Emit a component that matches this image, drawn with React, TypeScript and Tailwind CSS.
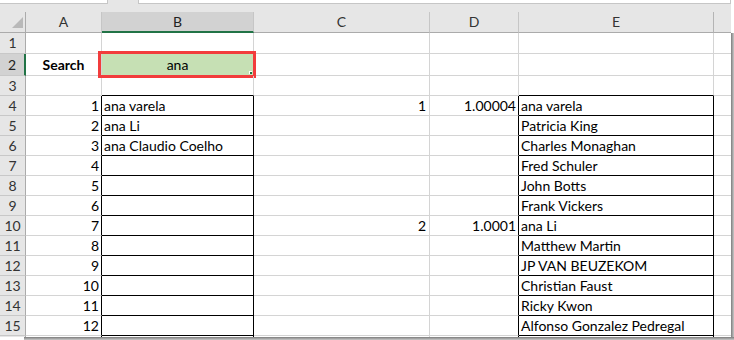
import React from 'react';

type Row = {
  n: number;
  A?: string;
  B?: string;
  C?: string;
  D?: string;
  E?: string;
  hidden?: boolean;
};

const names = [
  'ana varela', 'Patricia King', 'Charles Monaghan', 'Fred Schuler', 'John Botts', 'Frank Vickers',
  'ana Li', 'Matthew Martin', 'JP VAN BEUZEKOM', 'Christian Faust', 'Ricky Kwon', 'Alfonso Gonzalez Pedregal',
];
const matches = ['ana varela', 'ana Li', 'ana Claudio Coelho'];

const rows: Row[] = [
  { n: 1 },
  { n: 2, A: 'Search', B: 'ana' },
  { n: 3 },
  ...names.map((e, i) => ({
    n: i + 4,
    A: String(i + 1),
    B: matches[i],
    C: i === 0 ? '1' : i === 6 ? '2' : undefined,
    D: i === 0 ? '1.00004' : i === 6 ? '1.0001' : undefined,
    E: e,
  })),
  // row 16 only peeks out under row 15
  { n: 16, hidden: true },
];

const GRID = 'border-[#d4d4d4]';

// black edge for the boxed ranges (B4:B.., E4:E..)
const rb = (boxed: boolean) => (boxed ? 'border-r-black' : 'border-r-[#d4d4d4]');
const bb = (boxed: boolean) => (boxed ? 'border-b-black' : 'border-b-[#d4d4d4]');

const Sheet = () => {
  return (
    <div className="w-[731px] h-[337px] overflow-hidden flex flex-col font-[Lato,'Liberation_Sans',sans-serif] text-[14px] text-black">
      {/* formula bar strip */}
      <div className="h-[12px] shrink-0 bg-[#e6e6e6] flex items-start">
        <div className="w-[108px] h-[4px] bg-white border-b border-r border-[#c6c6c6]" />
        <div className="w-[30px]" />
        <div className="w-[593px] h-[4px] bg-white border-b border-x border-[#c6c6c6]" />
      </div>

      {/* column headers */}
      <div className="h-[21px] shrink-0 flex leading-[20px] text-[#333]">
        <div className="w-[26px] bg-[#e6e6e6] border-r border-b border-[#ababab] flex justify-end items-end pr-[2px] pb-[4px]">
          <svg width="11" height="11" viewBox="0 0 11 11"><polygon points="11,0 11,11 0,11" fill="#b9b9b9" /></svg>
        </div>
        <div className="w-[76px] bg-[#e6e6e6] border-r border-r-[#c6c6c6] border-b border-b-[#ababab] text-center">A</div>
        <div className="w-[152px] bg-[#d2d2d2] border-r border-r-[#c6c6c6] border-b-2 border-b-[#217346] text-center text-[#222]">B</div>
        <div className="w-[176px] bg-[#e6e6e6] border-r border-r-[#c6c6c6] border-b border-b-[#ababab] text-center">C</div>
        <div className="w-[89px] bg-[#e6e6e6] border-r border-r-[#c6c6c6] border-b border-b-[#ababab] text-center">D</div>
        <div className="w-[195px] bg-[#e6e6e6] border-r border-r-[#b4b4b4] border-b border-b-[#ababab] text-center">E</div>
        <div className="w-[17px] bg-[#e6e6e6] border-b border-b-[#ababab]" />
      </div>

      {rows.map((r) => {
        const h = r.n === 1 ? 'h-[21px] leading-[20px]' : r.n === 2 ? 'h-[22px] leading-[21px]' : 'h-[20px] leading-[19px]';
        const box = r.n >= 4;
        const topOfBox = r.n >= 3;
        const sel = r.n === 2;
        return (
          <div key={r.n} className={`flex shrink-0 ${h}`}>
            <div
              className={`w-[26px] text-center border-b border-b-[#c8c8c8] ${
                sel ? 'bg-[#d2d2d2] border-r-2 border-r-[#217346] text-[#222]' : 'bg-[#e6e6e6] border-r border-r-[#ababab] text-[#333]'
              }`}
            >
              {!r.hidden && r.n}
            </div>
            <div className={`w-[76px] border-r border-b ${GRID} ${rb(box)} ${sel ? 'text-center font-bold' : 'text-right pr-[2px]'}`}>
              {r.A}
            </div>
            <div
              className={`w-[152px] border-r border-b ${GRID} ${rb(box)} ${bb(topOfBox)} relative ${
                sel ? 'bg-[#c6e0b4] text-center' : 'pl-[2px] whitespace-nowrap'
              }`}
            >
              {r.B}
              {sel && (
                <>
                  <div className="absolute -left-[4px] -top-[3px] w-[158px] h-[27px] border-[3px] border-[#f23c3c]" />
                  <div className="absolute right-[1px] bottom-[1px] w-[3px] h-[3px] bg-[#217346] border-l border-t border-white" />
                </>
              )}
            </div>
            <div className={`w-[176px] border-r border-b ${GRID} text-right pr-[3px]`}>{r.C}</div>
            <div className={`w-[89px] border-r border-b ${GRID} ${rb(box)} text-right pr-[2px]`}>{r.D}</div>
            <div className={`w-[195px] border-r border-b ${GRID} ${rb(box)} ${bb(topOfBox)} pl-[2px] whitespace-nowrap`}>
              {r.E}
            </div>
            <div className={`w-[17px] border-b ${GRID}`} />
          </div>
        );
      })}
    </div>
  );
};

export default function App() {
  return (
    <div className="w-[734px] h-[340px] bg-white overflow-hidden flex flex-col">
      <div className="flex h-[337px]">
        <Sheet />
        <div className="w-[3px] flex flex-col">
          <div className="h-[33px]" />
          <div className="flex-1 bg-linear-to-r from-[#7d7d7d] to-[#c9c9c9]" />
        </div>
      </div>
      <div className="h-[3px] flex">
        <div className="w-[24px]" />
        <div className="flex-1 bg-linear-to-b from-[#7d7d7d] to-[#c9c9c9]" />
      </div>
    </div>
  );
}
